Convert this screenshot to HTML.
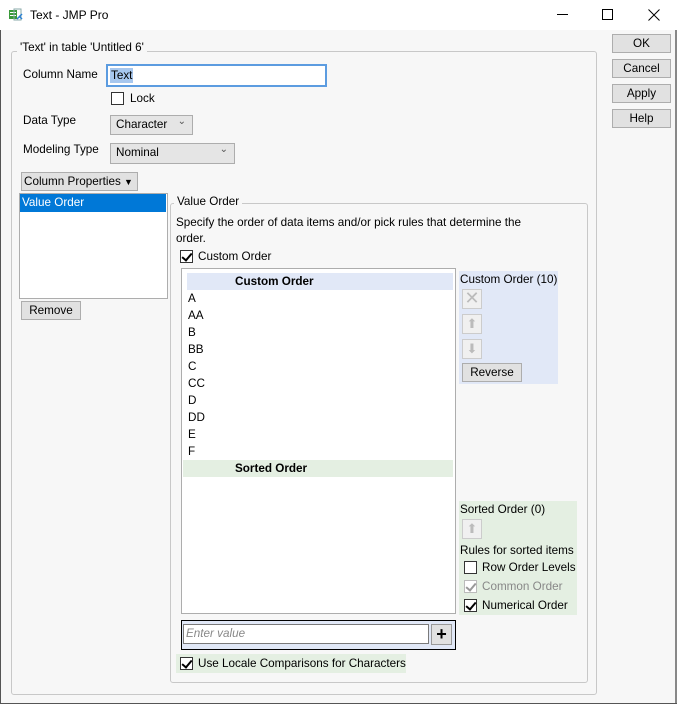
<!DOCTYPE html>
<html><head><style>
*{box-sizing:border-box;margin:0;padding:0}
body{width:677px;height:708px;background:#f7f7f7;font-family:"Liberation Sans",sans-serif;font-size:11.7px;color:#000;position:relative;overflow:hidden}
.a{position:absolute;white-space:nowrap}
.btn{position:absolute;background:#e1e1e1;border:1px solid #adadad;text-align:center;line-height:17px}
.cb{position:absolute;width:13px;height:13px;border:1px solid #333;background:#fff}
.cb.k::after{content:"";position:absolute;left:3px;top:0px;width:4px;height:8px;border:solid #000;border-width:0 2px 2px 0;transform:rotate(40deg)}
.cb.g{border-color:#bbb}.cb.g::after{border-color:#999}
.grp{position:absolute;border:1px solid #c8c8c8;border-radius:3px}
.lbl{position:absolute;background:#f7f7f7;padding:0 3px;line-height:14px}
.dd{position:absolute;background:#e5e5e5;border:1px solid #adadad;padding-left:5px;line-height:18px}
.dd::after{content:"⌄";position:absolute;right:6px;top:-3px;font-size:10px;color:#555}
.ib{position:absolute;width:20px;height:20px;border:1px solid #ccc;background:#f0f0f0;color:#bbb;text-align:center;line-height:18px;font-size:13px}
</style></head><body>
<div class="a" style="left:0;top:0;width:677px;height:30px;background:#fff"></div>
<svg class="a" style="left:8px;top:7px" width="16" height="16"><rect x="1" y="3" width="8" height="9" fill="#3a9a3a"/><rect x="2" y="5" width="6" height="1" fill="#fff"/><rect x="2" y="8" width="6" height="1" fill="#fff"/><rect x="6" y="2" width="7" height="11" fill="none" stroke="#8aa" /><path d="M9 12l5-5M11 9l3 3" stroke="#2a7fd0" stroke-width="1.5"/></svg>
<div class="a" style="left:30px;top:8px;font-size:12px">Text - JMP Pro</div>
<div class="a" style="left:557px;top:14px;width:11px;height:1px;background:#000"></div>
<div class="a" style="left:602px;top:9px;width:11px;height:11px;border:1px solid #000"></div>
<svg class="a" style="left:648px;top:9px" width="12" height="12"><path d="M0.5 0.5L11.5 11.5M11.5 0.5L0.5 11.5" stroke="#000" stroke-width="1"/></svg>
<div class="a" style="left:0;top:30px;width:1px;height:678px;background:#555"></div>
<div class="a" style="left:675px;top:30px;width:2px;height:678px;background:#888"></div>
<div class="a" style="left:0;top:703px;width:677px;height:5px;background:#fff;border-top:1px solid #555"></div>

<div class="grp" style="left:11px;top:51px;width:586px;height:644px"></div>
<div class="lbl" style="left:17px;top:41px">'Text' in table 'Untitled 6'</div>

<div class="btn" style="left:612px;top:34px;width:59px;height:19px">OK</div>
<div class="btn" style="left:612px;top:59px;width:59px;height:19px">Cancel</div>
<div class="btn" style="left:612px;top:84px;width:59px;height:19px">Apply</div>
<div class="btn" style="left:612px;top:109px;width:59px;height:19px">Help</div>

<div class="a" style="left:23px;top:68px">Column Name</div>
<div class="a" style="left:106px;top:64px;width:221px;height:23px;border:2px solid #5c9ce0;background:#fff"><span style="position:absolute;left:2px;top:2px;background:#a7c7ee;padding:0 1px;line-height:15px">Text</span></div>
<div class="cb" style="left:111px;top:92px"></div>
<div class="a" style="left:130px;top:92px">Lock</div>
<div class="a" style="left:23px;top:114px">Data Type</div>
<div class="dd" style="left:110px;top:115px;width:83px;height:20px">Character</div>
<div class="a" style="left:23px;top:143px">Modeling Type</div>
<div class="dd" style="left:110px;top:143px;width:125px;height:21px">Nominal</div>
<div class="btn" style="left:21px;top:172px;width:117px;height:19px;text-align:left;padding-left:2px">Column Properties <span style="font-size:9px">▼</span></div>
<div class="a" style="left:19px;top:193px;width:149px;height:106px;border:1px solid #adadad;background:#fff"></div>
<div class="a" style="left:20px;top:194px;width:146px;height:18px;background:#0078d7;color:#fff;padding-left:2px;line-height:18px">Value Order</div>
<div class="btn" style="left:21px;top:301px;width:60px;height:19px">Remove</div>

<div class="grp" style="left:170px;top:203px;width:418px;height:480px"></div>
<div class="lbl" style="left:174px;top:195px">Value Order</div>
<div class="a" style="left:176px;top:216px">Specify the order of data items and/or pick rules that determine the</div>
<div class="a" style="left:176px;top:232px">order.</div>
<div class="cb k" style="left:180px;top:250px"></div>
<div class="a" style="left:198px;top:250px">Custom Order</div>

<div class="a" style="left:181px;top:268px;width:275px;height:346px;border:1px solid #adadad;background:#fff"></div>
<div class="a" style="left:187px;top:273px;width:266px;height:17px;background:#e1e8f7;font-weight:bold;line-height:17px;padding-left:48px">Custom Order</div>
<div class="a" style="left:188px;top:290px;line-height:17px">A<br>AA<br>B<br>BB<br>C<br>CC<br>D<br>DD<br>E<br>F</div>
<div class="a" style="left:183px;top:460px;width:270px;height:17px;background:#e4efe2;font-weight:bold;line-height:17px;padding-left:52px">Sorted Order</div>

<div class="a" style="left:459px;top:271px;width:99px;height:113px;background:#e1e8f7"></div>
<div class="a" style="left:460px;top:273px">Custom Order (10)</div>
<div class="ib" style="left:462px;top:289px;font-size:18px;line-height:17px">✕</div>
<div class="ib" style="left:462px;top:314px">⬆</div>
<div class="ib" style="left:462px;top:339px">⬇</div>
<div class="btn" style="left:462px;top:363px;width:60px;height:19px">Reverse</div>

<div class="a" style="left:459px;top:501px;width:118px;height:114px;background:#e4efe2"></div>
<div class="a" style="left:460px;top:503px">Sorted Order (0)</div>
<div class="ib" style="left:462px;top:519px">⬆</div>
<div class="a" style="left:460px;top:544px">Rules for sorted items</div>
<div class="cb" style="left:464px;top:561px"></div>
<div class="a" style="left:482px;top:561px">Row Order Levels</div>
<div class="cb k g" style="left:464px;top:580px"></div>
<div class="a" style="left:482px;top:580px;color:#888">Common Order</div>
<div class="cb k" style="left:464px;top:599px"></div>
<div class="a" style="left:482px;top:599px">Numerical Order</div>

<div class="a" style="left:181px;top:620px;width:275px;height:30px;border:1px solid #000;background:#e1e8f7"></div>
<div class="a" style="left:183px;top:624px;width:246px;height:20px;border:1px solid #7a7a7a;background:#fff;color:#888;font-style:italic;padding-left:2px;line-height:18px">Enter value</div>
<div class="a" style="left:431px;top:624px;width:21px;height:21px;border:1px solid #999;background:#e1e1e1;text-align:center;font-weight:bold;font-size:18px;line-height:19px">+</div>

<div class="a" style="left:176px;top:654px;width:230px;height:19px;background:#e4efe2"></div>
<div class="cb k" style="left:180px;top:657px"></div>
<div class="a" style="left:198px;top:657px">Use Locale Comparisons for Characters</div>
</body></html>
